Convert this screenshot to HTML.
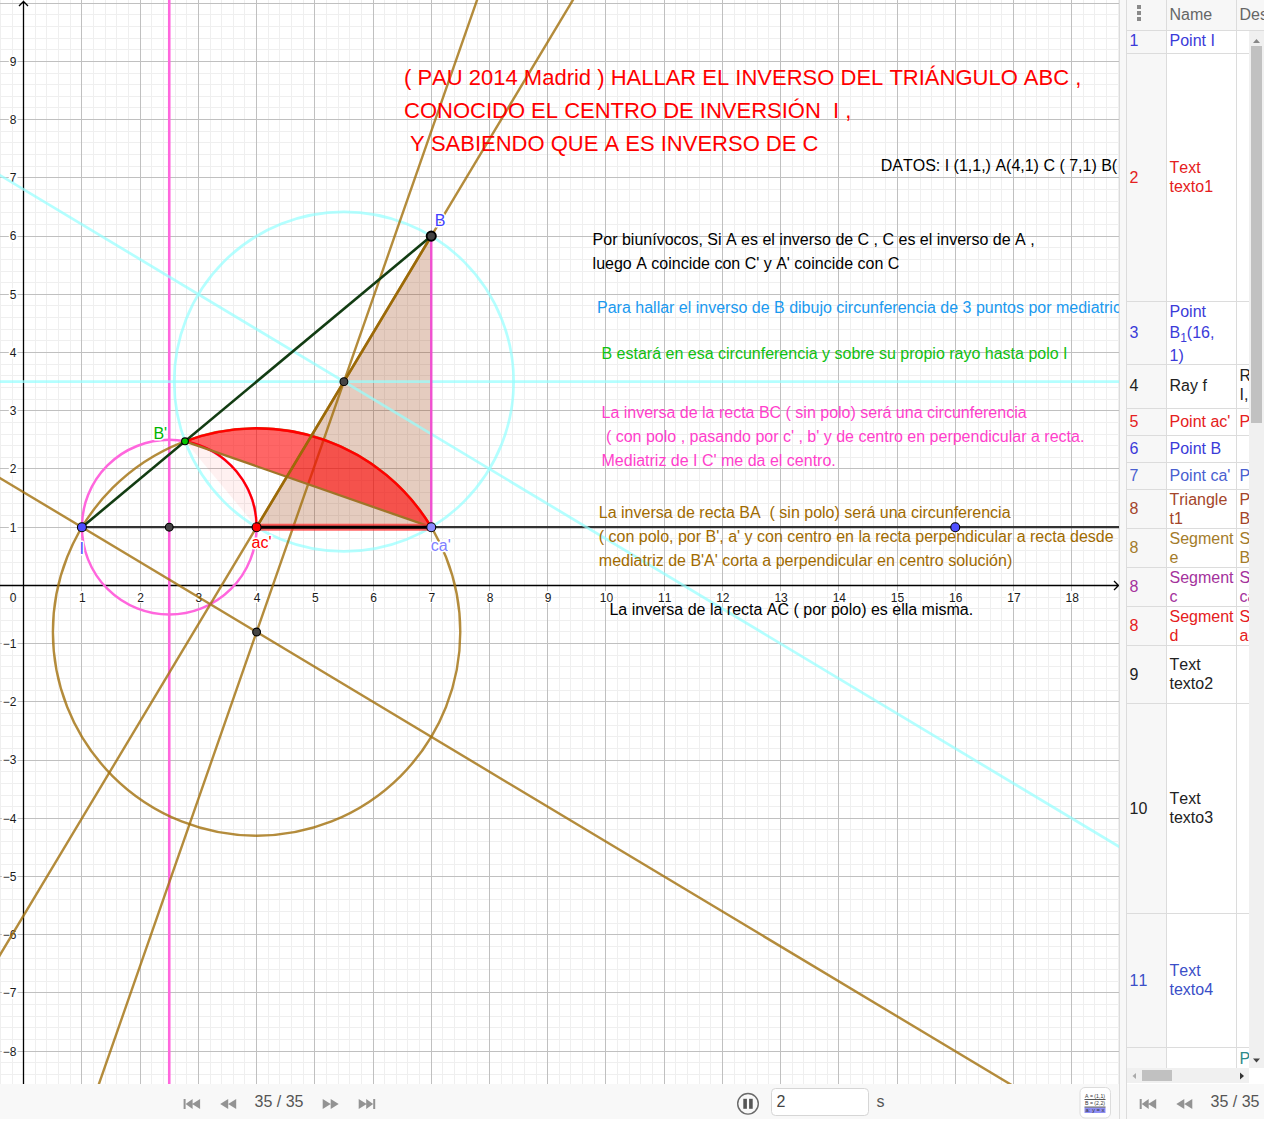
<!DOCTYPE html><html><head><meta charset="utf-8"><style>
*{margin:0;padding:0;box-sizing:border-box}
body{width:1266px;height:1121px;overflow:hidden;background:#fff;font-family:"Liberation Sans",sans-serif;position:relative}
#cv{position:absolute;left:0;top:0;width:1119px;height:1084px;overflow:hidden;background:#fff}
svg text{font-family:"Liberation Sans",sans-serif;font-kerning:none}
.tb{position:absolute;background:#f8f8f8}
</style></head><body>

<div id="cv"><svg width="1119" height="1084" viewBox="0 0 1119 1084">
<path d="M0.5 0V1084M12.5 0V1084M35.5 0V1084M46.5 0V1084M58.5 0V1084M70.5 0V1084M93.5 0V1084M105.5 0V1084M116.5 0V1084M128.5 0V1084M151.5 0V1084M163.5 0V1084M175.5 0V1084M186.5 0V1084M210.5 0V1084M221.5 0V1084M233.5 0V1084M244.5 0V1084M268.5 0V1084M279.5 0V1084M291.5 0V1084M303.5 0V1084M326.5 0V1084M338.5 0V1084M349.5 0V1084M361.5 0V1084M384.5 0V1084M396.5 0V1084M407.5 0V1084M419.5 0V1084M442.5 0V1084M454.5 0V1084M466.5 0V1084M477.5 0V1084M501.5 0V1084M512.5 0V1084M524.5 0V1084M536.5 0V1084M559.5 0V1084M570.5 0V1084M582.5 0V1084M594.5 0V1084M617.5 0V1084M629.5 0V1084M640.5 0V1084M652.5 0V1084M675.5 0V1084M687.5 0V1084M699.5 0V1084M710.5 0V1084M734.5 0V1084M745.5 0V1084M757.5 0V1084M768.5 0V1084M792.5 0V1084M803.5 0V1084M815.5 0V1084M827.5 0V1084M850.5 0V1084M862.5 0V1084M873.5 0V1084M885.5 0V1084M908.5 0V1084M920.5 0V1084M931.5 0V1084M943.5 0V1084M966.5 0V1084M978.5 0V1084M990.5 0V1084M1001.5 0V1084M1025.5 0V1084M1036.5 0V1084M1048.5 0V1084M1060.5 0V1084M1083.5 0V1084M1094.5 0V1084M1106.5 0V1084M1118.5 0V1084M0 1074.5H1119M0 1062.5H1119M0 1039.5H1119M0 1027.5H1119M0 1016.5H1119M0 1004.5H1119M0 981.5H1119M0 969.5H1119M0 958.5H1119M0 946.5H1119M0 923.5H1119M0 911.5H1119M0 899.5H1119M0 888.5H1119M0 864.5H1119M0 853.5H1119M0 841.5H1119M0 829.5H1119M0 806.5H1119M0 795.5H1119M0 783.5H1119M0 771.5H1119M0 748.5H1119M0 736.5H1119M0 725.5H1119M0 713.5H1119M0 690.5H1119M0 678.5H1119M0 666.5H1119M0 655.5H1119M0 631.5H1119M0 620.5H1119M0 608.5H1119M0 597.5H1119M0 573.5H1119M0 562.5H1119M0 550.5H1119M0 538.5H1119M0 515.5H1119M0 503.5H1119M0 492.5H1119M0 480.5H1119M0 457.5H1119M0 445.5H1119M0 434.5H1119M0 422.5H1119M0 399.5H1119M0 387.5H1119M0 375.5H1119M0 364.5H1119M0 340.5H1119M0 329.5H1119M0 317.5H1119M0 305.5H1119M0 282.5H1119M0 271.5H1119M0 259.5H1119M0 247.5H1119M0 224.5H1119M0 212.5H1119M0 201.5H1119M0 189.5H1119M0 166.5H1119M0 154.5H1119M0 142.5H1119M0 131.5H1119M0 107.5H1119M0 96.5H1119M0 84.5H1119M0 73.5H1119M0 49.5H1119M0 38.5H1119M0 26.5H1119M0 14.5H1119" stroke="#efefef" stroke-width="1" fill="none"/>
<path d="M23.5 0V1084M81.5 0V1084M140.5 0V1084M198.5 0V1084M256.5 0V1084M314.5 0V1084M373.5 0V1084M431.5 0V1084M489.5 0V1084M547.5 0V1084M605.5 0V1084M664.5 0V1084M722.5 0V1084M780.5 0V1084M838.5 0V1084M897.5 0V1084M955.5 0V1084M1013.5 0V1084M1071.5 0V1084M0 1051.5H1119M0 992.5H1119M0 934.5H1119M0 876.5H1119M0 818.5H1119M0 760.5H1119M0 701.5H1119M0 643.5H1119M0 585.5H1119M0 527.5H1119M0 468.5H1119M0 410.5H1119M0 352.5H1119M0 294.5H1119M0 236.5H1119M0 177.5H1119M0 119.5H1119M0 61.5H1119M0 3.5H1119" stroke="#c0c0c0" stroke-width="1" fill="none"/>
<rect x="78.09" y="591" width="8.67" height="12" fill="#fff"/><text x="82.42" y="601.5" font-size="12" text-anchor="middle" fill="#1a1a1a">1</text><rect x="136.31" y="591" width="8.67" height="12" fill="#fff"/><text x="140.64" y="601.5" font-size="12" text-anchor="middle" fill="#1a1a1a">2</text><rect x="194.53" y="591" width="8.67" height="12" fill="#fff"/><text x="198.87" y="601.5" font-size="12" text-anchor="middle" fill="#1a1a1a">3</text><rect x="252.75" y="591" width="8.67" height="12" fill="#fff"/><text x="257.09" y="601.5" font-size="12" text-anchor="middle" fill="#1a1a1a">4</text><rect x="310.98" y="591" width="8.67" height="12" fill="#fff"/><text x="315.31" y="601.5" font-size="12" text-anchor="middle" fill="#1a1a1a">5</text><rect x="369.2" y="591" width="8.67" height="12" fill="#fff"/><text x="373.53" y="601.5" font-size="12" text-anchor="middle" fill="#1a1a1a">6</text><rect x="427.42" y="591" width="8.67" height="12" fill="#fff"/><text x="431.75" y="601.5" font-size="12" text-anchor="middle" fill="#1a1a1a">7</text><rect x="485.64" y="591" width="8.67" height="12" fill="#fff"/><text x="489.98" y="601.5" font-size="12" text-anchor="middle" fill="#1a1a1a">8</text><rect x="543.86" y="591" width="8.67" height="12" fill="#fff"/><text x="548.2" y="601.5" font-size="12" text-anchor="middle" fill="#1a1a1a">9</text><rect x="598.75" y="591" width="15.34" height="12" fill="#fff"/><text x="606.42" y="601.5" font-size="12" text-anchor="middle" fill="#1a1a1a">10</text><rect x="656.97" y="591" width="15.34" height="12" fill="#fff"/><text x="664.64" y="601.5" font-size="12" text-anchor="middle" fill="#1a1a1a">11</text><rect x="715.19" y="591" width="15.34" height="12" fill="#fff"/><text x="722.86" y="601.5" font-size="12" text-anchor="middle" fill="#1a1a1a">12</text><rect x="773.42" y="591" width="15.34" height="12" fill="#fff"/><text x="781.09" y="601.5" font-size="12" text-anchor="middle" fill="#1a1a1a">13</text><rect x="831.64" y="591" width="15.34" height="12" fill="#fff"/><text x="839.31" y="601.5" font-size="12" text-anchor="middle" fill="#1a1a1a">14</text><rect x="889.86" y="591" width="15.34" height="12" fill="#fff"/><text x="897.53" y="601.5" font-size="12" text-anchor="middle" fill="#1a1a1a">15</text><rect x="948.08" y="591" width="15.34" height="12" fill="#fff"/><text x="955.75" y="601.5" font-size="12" text-anchor="middle" fill="#1a1a1a">16</text><rect x="1006.3" y="591" width="15.34" height="12" fill="#fff"/><text x="1013.97" y="601.5" font-size="12" text-anchor="middle" fill="#1a1a1a">17</text><rect x="1064.53" y="591" width="15.34" height="12" fill="#fff"/><text x="1072.2" y="601.5" font-size="12" text-anchor="middle" fill="#1a1a1a">18</text><rect x="8.83" y="55.42" width="8.67" height="12" fill="#fff"/><text x="16.5" y="65.72" font-size="12" text-anchor="end" fill="#1a1a1a">9</text><rect x="8.83" y="113.64" width="8.67" height="12" fill="#fff"/><text x="16.5" y="123.94" font-size="12" text-anchor="end" fill="#1a1a1a">8</text><rect x="8.83" y="171.87" width="8.67" height="12" fill="#fff"/><text x="16.5" y="182.17" font-size="12" text-anchor="end" fill="#1a1a1a">7</text><rect x="8.83" y="230.09" width="8.67" height="12" fill="#fff"/><text x="16.5" y="240.39" font-size="12" text-anchor="end" fill="#1a1a1a">6</text><rect x="8.83" y="288.31" width="8.67" height="12" fill="#fff"/><text x="16.5" y="298.61" font-size="12" text-anchor="end" fill="#1a1a1a">5</text><rect x="8.83" y="346.53" width="8.67" height="12" fill="#fff"/><text x="16.5" y="356.83" font-size="12" text-anchor="end" fill="#1a1a1a">4</text><rect x="8.83" y="404.75" width="8.67" height="12" fill="#fff"/><text x="16.5" y="415.05" font-size="12" text-anchor="end" fill="#1a1a1a">3</text><rect x="8.83" y="462.98" width="8.67" height="12" fill="#fff"/><text x="16.5" y="473.28" font-size="12" text-anchor="end" fill="#1a1a1a">2</text><rect x="8.83" y="521.2" width="8.67" height="12" fill="#fff"/><text x="16.5" y="531.5" font-size="12" text-anchor="end" fill="#1a1a1a">1</text><rect x="1.8" y="637.64" width="15.7" height="12" fill="#fff"/><text x="16.5" y="647.94" font-size="12" text-anchor="end" fill="#1a1a1a">−1</text><rect x="1.8" y="695.86" width="15.7" height="12" fill="#fff"/><text x="16.5" y="706.16" font-size="12" text-anchor="end" fill="#1a1a1a">−2</text><rect x="1.8" y="754.09" width="15.7" height="12" fill="#fff"/><text x="16.5" y="764.39" font-size="12" text-anchor="end" fill="#1a1a1a">−3</text><rect x="1.8" y="812.31" width="15.7" height="12" fill="#fff"/><text x="16.5" y="822.61" font-size="12" text-anchor="end" fill="#1a1a1a">−4</text><rect x="1.8" y="870.53" width="15.7" height="12" fill="#fff"/><text x="16.5" y="880.83" font-size="12" text-anchor="end" fill="#1a1a1a">−5</text><rect x="1.8" y="928.75" width="15.7" height="12" fill="#fff"/><text x="16.5" y="939.05" font-size="12" text-anchor="end" fill="#1a1a1a">−6</text><rect x="1.8" y="986.97" width="15.7" height="12" fill="#fff"/><text x="16.5" y="997.27" font-size="12" text-anchor="end" fill="#1a1a1a">−7</text><rect x="1.8" y="1045.2" width="15.7" height="12" fill="#fff"/><text x="16.5" y="1055.5" font-size="12" text-anchor="end" fill="#1a1a1a">−8</text><text x="16.5" y="601.5" font-size="12" text-anchor="end" fill="#1a1a1a">0</text>
<path d="M0 585.5H1118.5M1114 581L1118.5 585.5L1114 590M23.5 1084V1.5M19.0 6L23.5 1.5L28.0 6" stroke="#000" stroke-width="1.3" fill="none"/>
<path d="M256.59 527.2L431.25 527.2L431.25 236.09Z" fill="#993300" fill-opacity="0.25"/>
<path d="M81.92 527.2L1119 527.2" stroke="#333" stroke-width="2.2"/>
<path d="M169.25 0V1084" stroke="#ff66dd" stroke-width="2.6"/>
<path d="M0 381.64H1119M-11300.48 -6605L11988.32 7368.28" stroke="#94ffff" stroke-opacity="0.7" stroke-width="2.7" fill="none"/>
<circle cx="343.92" cy="381.64" r="169.74" stroke="#94ffff" stroke-width="2.7" fill="none" stroke-opacity="0.7"/>
<circle cx="169.25" cy="527.2" r="87.33" stroke="#ff66dd" stroke-width="2.5" fill="none"/>
<path d="M-6730.05 12171.6L7243.23 -11117.2M-11562.48 -6459.44L11726.32 7513.84M-3236.73 10646.18L3749.91 -9382.19" stroke="#a16f0b" stroke-opacity="0.8" stroke-width="2.4" fill="none"/>
<circle cx="256.59" cy="632" r="203.69" stroke="#a16f0b" stroke-width="2.4" fill="none" stroke-opacity="0.8"/>
<path d="M185 441.3A87.33 87.33 0 0 1 256.59 527.2Z" fill="#ff0000" fill-opacity="0.055"/>
<path d="M185 441.3A87.33 87.33 0 0 1 256.59 527.2" stroke="#ff0000" stroke-width="2.2" fill="none"/>
<path d="M185 441.3A203.69 203.69 0 0 1 431.25 527.2Z" fill="#ff0000" fill-opacity="0.6"/>
<path d="M185 441.3A203.69 203.69 0 0 1 431.25 527.2" stroke="#ff0000" stroke-width="2.4" fill="none"/>
<path d="M185 441.3L431.25 527.2" stroke="#a07428" stroke-width="2.3"/>
<path d="M256.59 527.2L431.25 527.2" stroke="#ff3030" stroke-opacity="0.75" stroke-width="7"/>
<path d="M256.59 527.2L431.25 527.2" stroke="#000" stroke-width="3"/>
<path d="M256.59 527.2L431.25 236.09" stroke="#9c6a08" stroke-width="2.6"/>
<path d="M431.25 527.2L431.25 236.09" stroke="#f04fd0" stroke-width="2.4"/>
<path d="M81.92 527.2L431.25 236.09" stroke="#123c12" stroke-width="2.6"/>
<text x="404" y="85" font-size="22" fill="#ff0000" xml:space="preserve">( PAU 2014 Madrid ) HALLAR EL INVERSO DEL TRIÁNGULO ABC ,</text><text x="404" y="117.8" font-size="22" fill="#ff0000" xml:space="preserve">CONOCIDO EL CENTRO DE INVERSIÓN  I ,</text><text x="404" y="150.8" font-size="22" fill="#ff0000" xml:space="preserve"> Y SABIENDO QUE A ES INVERSO DE C</text><text x="880.7" y="170.7" font-size="16" fill="#000" xml:space="preserve">DATOS: I (1,1,) A(4,1) C ( 7,1) B(</text><text x="592.6" y="244.8" font-size="16" fill="#000" xml:space="preserve">Por biunívocos, Si A es el inverso de C , C es el inverso de A ,</text><text x="592.6" y="268.8" font-size="16" fill="#000" xml:space="preserve">luego A coincide con C' y A' coincide con C</text><text x="592.6" y="312.6" font-size="16" fill="#1a9af0" xml:space="preserve"> Para hallar el inverso de B dibujo circunferencia de 3 puntos por mediatrices</text><text x="592.6" y="358.6" font-size="16" fill="#10c010" xml:space="preserve">  B estará en esa circunferencia y sobre su propio rayo hasta polo I</text><text x="601.5" y="417.6" font-size="16" fill="#ff3fcc" xml:space="preserve">La inversa de la recta BC ( sin polo) será una circunferencia</text><text x="601.5" y="441.6" font-size="16" fill="#ff3fcc" xml:space="preserve"> ( con polo , pasando por c' , b' y de centro en perpendicular a recta.</text><text x="601.5" y="465.6" font-size="16" fill="#ff3fcc" xml:space="preserve">Mediatriz de I C' me da el centro.</text><text x="598.8" y="517.7" font-size="16" fill="#a06a00" xml:space="preserve">La inversa de recta BA  ( sin polo) será una circunferencia</text><text x="598.8" y="541.7" font-size="16" fill="#a06a00" xml:space="preserve">( con polo, por B', a' y con centro en la recta perpendicular a recta desde</text><text x="598.8" y="565.7" font-size="16" fill="#a06a00" xml:space="preserve">mediatriz de B'A' corta a perpendicular en centro solución)</text><text x="605" y="614.5" font-size="16" fill="#000" xml:space="preserve"> La inversa de la recta AC ( por polo) es ella misma.</text>
<circle cx="169.25" cy="527.2" r="3.9" fill="#444" stroke="#000" stroke-width="1.1"/><circle cx="343.92" cy="381.64" r="3.9" fill="#444" stroke="#000" stroke-width="1.1"/><circle cx="256.59" cy="632" r="3.9" fill="#444" stroke="#000" stroke-width="1.1"/>
<circle cx="81.92" cy="527.2" r="4.5" fill="#4d4dff" stroke="#000" stroke-width="1.1"/><circle cx="256.59" cy="527.2" r="4.5" fill="#ff0000" stroke="#000" stroke-width="1.1"/><circle cx="431.25" cy="527.2" r="4.5" fill="#8a8aff" stroke="#000" stroke-width="1.1"/><circle cx="431.25" cy="236.09" r="4.6" fill="#444" stroke="#000" stroke-width="1.9"/><circle cx="955.25" cy="527.2" r="4.5" fill="#5050ff" stroke="#000" stroke-width="1.1"/><circle cx="185" cy="441.3" r="3.4" fill="#00c800" stroke="#000" stroke-width="1.1"/>
<text x="79.5" y="553.8" font-size="16" fill="#4d4dff" stroke="#fff" stroke-width="3" paint-order="stroke" stroke-linejoin="round">I</text><text x="251.5" y="548.2" font-size="16" fill="#ff0000" stroke="#fff" stroke-width="3" paint-order="stroke" stroke-linejoin="round">ac'</text><text x="430.8" y="551" font-size="16" fill="#8080ff" stroke="#fff" stroke-width="3" paint-order="stroke" stroke-linejoin="round">ca'</text><text x="434.7" y="225.7" font-size="16" fill="#4040ff" stroke="#fff" stroke-width="3" paint-order="stroke" stroke-linejoin="round">B</text><text x="153.4" y="438.6" font-size="16" fill="#00b400" stroke="#fff" stroke-width="3" paint-order="stroke" stroke-linejoin="round">B'</text>
</svg></div>
<svg style="position:absolute;left:0;top:1084px" width="1119" height="37" viewBox="0 1084 1119 37"><rect x="0" y="1084" width="1119" height="35" fill="#f8f8f8"/><rect x="183.6" y="1099" width="2" height="10" fill="#939393"/><path d="M185.6 1104.0L192.6 1099V1109ZM192.1 1104.0L200.1 1099V1109Z" fill="#939393"/><path d="M220.2 1104.0L228.2 1099V1109ZM228.2 1104.0L236.2 1099V1109Z" fill="#939393"/><text x="254.5" y="1107" font-size="16" fill="#555">35 / 35</text><path d="M322.7 1099L330.7 1104.0L322.7 1109ZM330.7 1099L338.7 1104.0L330.7 1109Z" fill="#939393"/><path d="M358.7 1099L366.7 1104.0L358.7 1109ZM366.2 1099L373.2 1104.0L366.2 1109Z" fill="#939393"/><rect x="373.2" y="1099" width="2" height="10" fill="#939393"/><circle cx="748" cy="1103.8" r="10.3" fill="none" stroke="#6a6a6a" stroke-width="1.4"/><rect x="743.3" y="1098.8" width="3.6" height="10" fill="#555"/><rect x="749.1" y="1098.8" width="3.6" height="10" fill="#555"/><rect x="771.5" y="1088.5" width="97" height="27" rx="4" fill="#fff" stroke="#d6d6d6" stroke-width="1"/><text x="776.5" y="1107" font-size="16" fill="#444">2</text><text x="876.5" y="1107" font-size="16" fill="#555">s</text><rect x="1080" y="1087.5" width="30.5" height="30.5" rx="5" fill="#fff" stroke="#dcdcdc" stroke-width="1"/><rect x="1084.5" y="1107.5" width="21" height="5.5" fill="#8f8ff5"/><text x="1095" y="1098" font-size="5.6" text-anchor="middle" fill="#333" textLength="20" lengthAdjust="spacingAndGlyphs">A = (1,1)</text><rect x="1084.5" y="1099" width="21" height="0.9" fill="#444"/><text x="1095" y="1105.3" font-size="5.6" text-anchor="middle" fill="#333" textLength="20" lengthAdjust="spacingAndGlyphs">B = (2,2)</text><rect x="1084.5" y="1106.6" width="21" height="0.9" fill="#444"/><text x="1095" y="1112.2" font-size="5.6" text-anchor="middle" fill="#333" textLength="19" lengthAdjust="spacingAndGlyphs">a: y = x</text></svg>
<svg style="position:absolute;left:1119px;top:0" width="147" height="1121" viewBox="1119 0 147 1121"><defs><clipPath id="c3"><rect x="1237" y="0" width="12" height="1068"/></clipPath><clipPath id="c3h"><rect x="1237" y="0" width="27" height="30"/></clipPath></defs><rect x="1119" y="0" width="147" height="1121" fill="#fff"/><rect x="1119" y="0" width="8" height="1119" fill="#f8f8f8"/><rect x="1119" y="0" width="1" height="1119" fill="#dcdcdc"/><rect x="1126" y="0" width="1" height="1119" fill="#dcdcdc"/><rect x="1127" y="0" width="137" height="30" fill="#f7f7f7"/><rect x="1127" y="30" width="39" height="1038" fill="#f7f7f7"/><rect x="1127" y="30" width="137" height="1" fill="#dcdcdc"/><rect x="1127" y="53" width="122" height="1" fill="#dcdcdc"/><rect x="1127" y="301" width="122" height="1" fill="#dcdcdc"/><rect x="1127" y="364" width="122" height="1" fill="#dcdcdc"/><rect x="1127" y="408" width="122" height="1" fill="#dcdcdc"/><rect x="1127" y="435" width="122" height="1" fill="#dcdcdc"/><rect x="1127" y="462" width="122" height="1" fill="#dcdcdc"/><rect x="1127" y="489" width="122" height="1" fill="#dcdcdc"/><rect x="1127" y="528" width="122" height="1" fill="#dcdcdc"/><rect x="1127" y="567" width="122" height="1" fill="#dcdcdc"/><rect x="1127" y="606" width="122" height="1" fill="#dcdcdc"/><rect x="1127" y="645" width="122" height="1" fill="#dcdcdc"/><rect x="1127" y="703" width="122" height="1" fill="#dcdcdc"/><rect x="1127" y="913" width="122" height="1" fill="#dcdcdc"/><rect x="1127" y="1047" width="122" height="1" fill="#dcdcdc"/><rect x="1166" y="0" width="1" height="1068" fill="#dcdcdc"/><rect x="1236" y="0" width="1" height="1068" fill="#dcdcdc"/><rect x="1137" y="5" width="4" height="4" fill="#8a8a8a"/><rect x="1137" y="11" width="4" height="4" fill="#8a8a8a"/><rect x="1137" y="17" width="4" height="4" fill="#8a8a8a"/><text x="1169.5" y="20" font-size="16" fill="#666" xml:space="preserve">Name</text><text x="1239.5" y="20" font-size="16" fill="#666" clip-path="url(#c3h)" xml:space="preserve">Description</text><text x="1129.5" y="45.5" font-size="16" fill="#3b3bd9" xml:space="preserve">1</text><text x="1169.5" y="45.5" font-size="16" fill="#3b3bd9" xml:space="preserve">Point I</text><text x="1129.5" y="182.8" font-size="16" fill="#e52020" xml:space="preserve">2</text><text x="1169.5" y="173.3" font-size="16" fill="#e52020" xml:space="preserve">Text</text><text x="1169.5" y="192.3" font-size="16" fill="#e52020" xml:space="preserve">texto1</text><text x="1129.5" y="338" font-size="16" fill="#3b3bd9" xml:space="preserve">3</text><text x="1169.5" y="316.5" font-size="16" fill="#3b3bd9" xml:space="preserve">Point</text><text x="1169.5" y="338" font-size="16" fill="#3b3bd9">B<tspan font-size="12" dy="4">1</tspan><tspan dy="-4">(16,</tspan></text><text x="1169.5" y="360.5" font-size="16" fill="#3b3bd9" xml:space="preserve">1)</text><text x="1129.5" y="390.8" font-size="16" fill="#222" xml:space="preserve">4</text><text x="1169.5" y="390.8" font-size="16" fill="#222" xml:space="preserve">Ray f</text><text x="1239.5" y="381.3" font-size="16" fill="#222" clip-path="url(#c3)" xml:space="preserve">Ray</text><text x="1239.5" y="400.3" font-size="16" fill="#222" clip-path="url(#c3)" xml:space="preserve">I,</text><text x="1129.5" y="427.3" font-size="16" fill="#e52020" xml:space="preserve">5</text><text x="1169.5" y="427.3" font-size="16" fill="#e52020" xml:space="preserve">Point ac'</text><text x="1239.5" y="427.3" font-size="16" fill="#e52020" clip-path="url(#c3)" xml:space="preserve">Point</text><text x="1129.5" y="454.3" font-size="16" fill="#3b3bd9" xml:space="preserve">6</text><text x="1169.5" y="454.3" font-size="16" fill="#3b3bd9" xml:space="preserve">Point B</text><text x="1129.5" y="481.3" font-size="16" fill="#4a5fd0" xml:space="preserve">7</text><text x="1169.5" y="481.3" font-size="16" fill="#4a5fd0" xml:space="preserve">Point ca'</text><text x="1239.5" y="481.3" font-size="16" fill="#4a5fd0" clip-path="url(#c3)" xml:space="preserve">Point</text><text x="1129.5" y="514.3" font-size="16" fill="#a4452a" xml:space="preserve">8</text><text x="1169.5" y="504.8" font-size="16" fill="#a4452a" xml:space="preserve">Triangle</text><text x="1169.5" y="523.8" font-size="16" fill="#a4452a" xml:space="preserve">t1</text><text x="1239.5" y="504.8" font-size="16" fill="#a4452a" clip-path="url(#c3)" xml:space="preserve">Po</text><text x="1239.5" y="523.8" font-size="16" fill="#a4452a" clip-path="url(#c3)" xml:space="preserve">B</text><text x="1129.5" y="553.3" font-size="16" fill="#a47c2a" xml:space="preserve">8</text><text x="1169.5" y="543.8" font-size="16" fill="#a47c2a" xml:space="preserve">Segment</text><text x="1169.5" y="562.8" font-size="16" fill="#a47c2a" xml:space="preserve">e</text><text x="1239.5" y="543.8" font-size="16" fill="#a47c2a" clip-path="url(#c3)" xml:space="preserve">S</text><text x="1239.5" y="562.8" font-size="16" fill="#a47c2a" clip-path="url(#c3)" xml:space="preserve">B</text><text x="1129.5" y="592.3" font-size="16" fill="#a4329c" xml:space="preserve">8</text><text x="1169.5" y="582.8" font-size="16" fill="#a4329c" xml:space="preserve">Segment</text><text x="1169.5" y="601.8" font-size="16" fill="#a4329c" xml:space="preserve">c</text><text x="1239.5" y="582.8" font-size="16" fill="#a4329c" clip-path="url(#c3)" xml:space="preserve">S</text><text x="1239.5" y="601.8" font-size="16" fill="#a4329c" clip-path="url(#c3)" xml:space="preserve">ca</text><text x="1129.5" y="631.3" font-size="16" fill="#e52020" xml:space="preserve">8</text><text x="1169.5" y="621.8" font-size="16" fill="#e52020" xml:space="preserve">Segment</text><text x="1169.5" y="640.8" font-size="16" fill="#e52020" xml:space="preserve">d</text><text x="1239.5" y="621.8" font-size="16" fill="#e52020" clip-path="url(#c3)" xml:space="preserve">S</text><text x="1239.5" y="640.8" font-size="16" fill="#e52020" clip-path="url(#c3)" xml:space="preserve">ac</text><text x="1129.5" y="679.8" font-size="16" fill="#222" xml:space="preserve">9</text><text x="1169.5" y="670.3" font-size="16" fill="#222" xml:space="preserve">Text</text><text x="1169.5" y="689.3" font-size="16" fill="#222" xml:space="preserve">texto2</text><text x="1129.5" y="813.8" font-size="16" fill="#222" xml:space="preserve">10</text><text x="1169.5" y="804.3" font-size="16" fill="#222" xml:space="preserve">Text</text><text x="1169.5" y="823.3" font-size="16" fill="#222" xml:space="preserve">texto3</text><text x="1129.5" y="985.8" font-size="16" fill="#3b4fc8" xml:space="preserve">11</text><text x="1169.5" y="976.3" font-size="16" fill="#3b4fc8" xml:space="preserve">Text</text><text x="1169.5" y="995.3" font-size="16" fill="#3b4fc8" xml:space="preserve">texto4</text><text x="1239.5" y="1064" font-size="16" fill="#2e8a8a" clip-path="url(#c3)" xml:space="preserve">Point</text><rect x="1249" y="31" width="15" height="1037" fill="#f0f0f0"/><rect x="1251" y="46" width="11" height="377" fill="#c1c1c1"/><path d="M1253 43L1256.5 39L1260 43Z" fill="#888"/><path d="M1253 1058.5L1256.5 1062.5L1260 1058.5Z" fill="#444"/><rect x="1127" y="1068" width="122" height="15" fill="#f0f0f0"/><rect x="1142" y="1070" width="30" height="11" fill="#c1c1c1"/><path d="M1136 1073L1132.5 1076L1136 1079Z" fill="#aaa"/><path d="M1240 1072.5L1244 1076L1240 1079.5Z" fill="#333"/><rect x="1127" y="1084" width="137" height="35" fill="#f8f8f8"/><rect x="1126" y="1084" width="1" height="35" fill="#dcdcdc"/><rect x="1139.7" y="1099" width="2" height="10" fill="#939393"/><path d="M1141.7 1104.0L1148.7 1099V1109ZM1148.2 1104.0L1156.2 1099V1109Z" fill="#939393"/><path d="M1176.3 1104.0L1184.3 1099V1109ZM1184.3 1104.0L1192.3 1099V1109Z" fill="#939393"/><text x="1210.5" y="1107" font-size="16" fill="#555">35 / 35</text></svg>
</body></html>
